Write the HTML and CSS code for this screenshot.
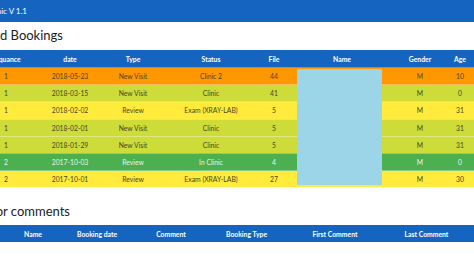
FILE: index.html
```html
<!DOCTYPE html>
<html lang="en">
<head>
  <meta charset="UTF-8" />
  <meta name="viewport" content="width=device-width, initial-scale=1.0"/>
  <title>Clinic</title>
  <link rel="stylesheet" href="styles.css">
</head>
<body>
  <div class="topbar">
    <div class="brand"><span>Clinic V 1.1</span></div>
  </div>

  <h2 class="section-title title-bookings"><span>Old Bookings</span></h2>

  <div class="table-wrap">
    <table class="grid bookings">
      <colgroup>
        <col style="width:64px"><col style="width:64px"><col style="width:62px"><col style="width:94px">
        <col style="width:32px"><col style="width:104px"><col style="width:52px"><col style="width:28px">
      </colgroup>
      <thead>
        <tr><th>Sequance</th><th>date</th><th>Type</th><th>Status</th><th>File</th><th>Name</th><th>Gender</th><th>Age</th></tr>
      </thead>
      <tbody>
        <tr class="orange"><td>1</td><td>2018-05-23</td><td>New Visit</td><td>Clinic 2</td><td>44</td><td></td><td>M</td><td>10</td></tr>
        <tr class="lime"><td>1</td><td>2018-03-15</td><td>New Visit</td><td>Clinic</td><td>41</td><td></td><td>M</td><td>0</td></tr>
        <tr class="yellow"><td>1</td><td>2018-02-02</td><td>Review</td><td>Exam (XRAY-LAB)</td><td>5</td><td></td><td>M</td><td>31</td></tr>
        <tr class="lime"><td>1</td><td>2018-02-01</td><td>New Visit</td><td>Clinic</td><td>5</td><td></td><td>M</td><td>31</td></tr>
        <tr class="lime"><td>1</td><td>2018-01-29</td><td>New Visit</td><td>Clinic</td><td>5</td><td></td><td>M</td><td>31</td></tr>
        <tr class="green"><td>2</td><td>2017-10-03</td><td>Review</td><td>In Clinic</td><td>4</td><td></td><td>M</td><td>0</td></tr>
        <tr class="yellow"><td>2</td><td>2017-10-01</td><td>Review</td><td>Exam (XRAY-LAB)</td><td>27</td><td></td><td>M</td><td>30</td></tr>
      </tbody>
    </table>
    <div class="name-mask"></div>
  </div>

  <h2 class="section-title title-comments"><span>Doctor comments</span></h2>

  <div class="table-wrap">
    <table class="grid comments">
      <colgroup>
        <col style="width:30px"><col style="width:58px"><col style="width:70px"><col style="width:78px">
        <col style="width:73px"><col style="width:104px"><col style="width:79px"><col style="width:8px">
      </colgroup>
      <thead>
        <tr><th></th><th>Name</th><th>Booking date</th><th>Comment</th><th>Booking Type</th><th>First Comment</th><th>Last Comment</th><th></th></tr>
      </thead>
    </table>
  </div>
</body>
</html>
```

FILE: styles.css
```css
body {
  margin: 0;
  background: #fff;
  font-family: Lato, "Open Sans", sans-serif;
  overflow: hidden;
}
.topbar {
  background: #1565c0;
  height: 22px;
  display: flex;
  align-items: center;
}
.brand {
  width: 27px;
  display: flex;
  justify-content: flex-end;
  overflow: hidden;
  white-space: nowrap;
  color: #fff;
  font-size: 8px;
}
.section-title {
  display: flex;
  justify-content: flex-end;
  overflow: hidden;
  white-space: nowrap;
  font-size: 13px;
  line-height: 16px;
  font-weight: normal;
  color: #222;
}
.title-bookings {
  width: 63px;
  margin: 5px 0 7px;
}
.title-comments {
  width: 70px;
  margin: 16px 0 6px;
}
.table-wrap {
  position: relative;
  margin-left: -26px;
  width: 500px;
}
.grid {
  width: 500px;
  table-layout: fixed;
  border-collapse: collapse;
  font-size: 6.8px;
}
.grid th {
  background: #1565c0;
  color: #fff;
  font-weight: bold;
  height: 17px;
  padding: 0;
  text-align: center;
  white-space: nowrap;
}
.grid td {
  height: 16.2px;
  padding: 0;
  text-align: center;
  color: #4a4520;
  border-top: 1px solid rgba(255, 255, 255, 0.35);
  white-space: nowrap;
}
.orange { background: #ff9800; }
.lime { background: #cddc39; }
.yellow { background: #ffeb3b; }
.green { background: #4caf50; }
.green td { color: #e8f5e9; }
.name-mask {
  position: absolute;
  left: 323px;
  top: 19px;
  width: 85px;
  height: 116px;
  background: #9dd5e8;
}
```
